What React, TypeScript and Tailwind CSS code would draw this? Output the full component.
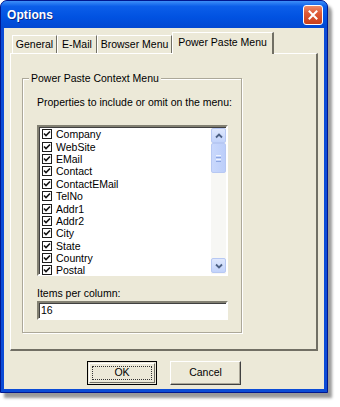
import React from "react";

const items = [
  "Company",
  "WebSite",
  "EMail",
  "Contact",
  "ContactEMail",
  "TelNo",
  "Addr1",
  "Addr2",
  "City",
  "State",
  "Country",
  "Postal",
];

function Check() {
  return (
    <span className="w-[10px] h-[10px] bg-white border border-[#1c1c1c] flex items-center justify-center shrink-0">
      <svg width="8" height="8" viewBox="0 0 8 8">
        <path d="M1 3.5 L3 5.5 L7 1.5" stroke="#111" strokeWidth="1.6" fill="none" />
      </svg>
    </span>
  );
}

function ScrollButton({ up }: { up?: boolean }) {
  return (
    <div className="h-[15px] w-[15px] rounded-[2px] border border-[#b7c8f3] bg-[linear-gradient(180deg,#dfe8fd_0%,#c2d3fb_100%)] flex items-center justify-center">
      <svg width="8" height="6" viewBox="0 0 8 6">
        <path
          d={up ? "M1 4.5 L4 1.5 L7 4.5" : "M1 1.5 L4 4.5 L7 1.5"}
          stroke="#4d6185"
          strokeWidth="1.8"
          fill="none"
        />
      </svg>
    </div>
  );
}

export default function App() {
  return (
    <div
      className="w-[340px] h-[407px] bg-white overflow-hidden"
      style={{ fontFamily: '"Liberation Sans", Arial, sans-serif' }}
    >
      {/* Window */}
      <div className="w-[328px] h-[393px] flex flex-col rounded-t-[7px] bg-[#0b4bd6] border border-[#00178f] shadow-[4px_5px_3px_rgba(0,0,0,0.4)]">
        {/* Title bar */}
        <div className="h-[27px] shrink-0 flex items-center justify-between pl-[6px] pr-[4px] rounded-t-[6px] bg-[linear-gradient(180deg,#3d8ff8_0%,#0b5ee9_20%,#0152e1_60%,#0248d2_100%)]">
          <span className="text-white font-bold text-[12px] tracking-[0.1px] [text-shadow:1px_1px_0_#0a2a8a]">
            Options
          </span>
          <div className="w-[20px] h-[20px] rounded-[3px] border border-white bg-[linear-gradient(180deg,#ec8b6a_0%,#df5a36_40%,#c9401c_100%)] flex items-center justify-center">
            <svg width="10" height="10" viewBox="0 0 10 10">
              <path d="M1.5 1.5 L8.5 8.5 M8.5 1.5 L1.5 8.5" stroke="white" strokeWidth="2" strokeLinecap="square" />
            </svg>
          </div>
        </div>

        {/* Client area */}
        <div className="flex-1 mx-[3px] mb-[3px] bg-[#ece9d8] flex flex-col px-[6px] pt-[4px] text-[10.5px] text-black">
          {/* Tabs */}
          <div className="flex items-end h-[21px] pl-[2px] relative z-10">
            <div className="w-[45px] h-[18px] border-t border-l border-white border-r border-r-[#716f64] flex items-center justify-center">
              General
            </div>
            <div className="w-[40px] h-[18px] border-t border-l border-white border-r border-r-[#716f64] flex items-center justify-center">
              E-Mail
            </div>
            <div className="w-[75px] h-[18px] border-t border-l border-white border-r border-r-[#716f64] flex items-center justify-center">
              Browser Menu
            </div>
            <div className="w-[102px] h-[22px] -mb-[1px] bg-[#ece9d8] border-t border-l border-white border-r-2 border-r-[#716f64] flex items-center justify-center pb-[2px]">
              Power Paste Menu
            </div>
          </div>

          {/* Tab panel */}
          <div className="h-[298px] w-[308px] border-t border-l border-white border-r-2 border-b-2 border-r-[#716f64] border-b-[#716f64] pl-[11px] pt-[24px]">
            {/* Group box */}
            <div className="relative w-[220px] h-[255px] border border-[#aca899] shadow-[inset_1px_1px_0_#fff,1px_1px_0_#fff] pl-[14px] pt-[17px]">
              <span className="absolute -top-[7px] left-[6px] px-[2px] bg-[#ece9d8] leading-[12px]">
                Power Paste Context Menu
              </span>
              <div className="leading-[12px]">Properties to include or omit on the menu:</div>

              {/* List box */}
              <div className="mt-[17px] w-[191px] h-[151px] bg-white border-2 border-t-[#828072] border-l-[#828072] border-b-white border-r-white shadow-[inset_1px_1px_0_#404040] flex">
                <div className="flex-1 pl-[3px] pt-[1px]">
                  {items.map((it) => (
                    <div key={it} className="h-[12.4px] flex items-center gap-[4px] leading-[12px]">
                      <Check />
                      <span>{it}</span>
                    </div>
                  ))}
                </div>
                <div className="w-[15px] mt-[1px] bg-[#f7f7f4] flex flex-col justify-between">
                  <div className="flex flex-col">
                    <ScrollButton up />
                    <div className="h-[30px] w-[15px] rounded-[2px] border border-[#b7c8f3] bg-[linear-gradient(90deg,#c9d8fc_0%,#bccefa_100%)] flex flex-col items-center justify-center gap-[1px]">
                      <span className="w-[5px] h-[1px] bg-[#eef3fe]" />
                      <span className="w-[5px] h-[1px] bg-[#8ca6e2]" />
                      <span className="w-[5px] h-[1px] bg-[#eef3fe]" />
                      <span className="w-[5px] h-[1px] bg-[#8ca6e2]" />
                    </div>
                  </div>
                  <div className="mb-[1px]">
                    <ScrollButton />
                  </div>
                </div>
              </div>

              <div className="mt-[11px] leading-[12px]">Items per column:</div>
              <div className="mt-[2px] w-[191px] h-[19px] bg-white border-2 border-t-[#828072] border-l-[#828072] border-b-white border-r-white shadow-[inset_1px_1px_0_#404040] flex items-center pl-[2px]">
                16
              </div>
            </div>
          </div>

          {/* Buttons */}
          <div className="flex justify-center gap-[13px] mt-[10px]">
            <div className="w-[70px] h-[24px] border border-black bg-[#ece9d8] p-[1px]">
              <div className="h-full border border-t-white border-l-white border-b-[#716f64] border-r-[#716f64] p-[2px]">
                <div className="h-full border border-dotted border-[#333] flex items-center justify-center">
                  OK
                </div>
              </div>
            </div>
            <div className="w-[71px] h-[24px] border border-t-white border-l-white border-b-[#404040] border-r-[#404040] shadow-[inset_-1px_-1px_0_#aca899] flex items-center justify-center">
              Cancel
            </div>
          </div>
        </div>
      </div>
    </div>
  );
}
